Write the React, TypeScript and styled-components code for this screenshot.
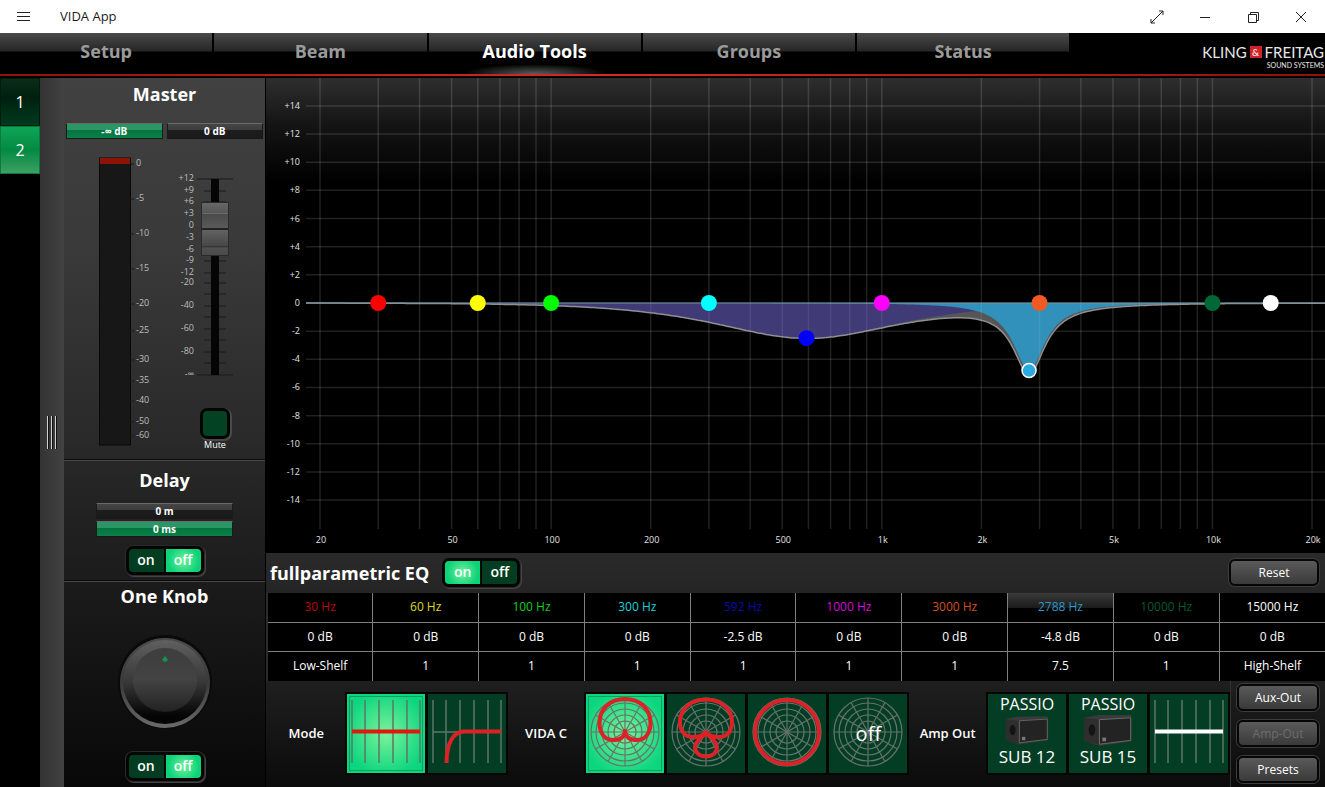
import React from "react";
import styled, { createGlobalStyle, css } from "styled-components";

const GlobalStyle = createGlobalStyle`
  *, *::before, *::after { box-sizing: border-box; }
  body {
    margin: 0;
    background: #000;
    color: #fff;
    font-family: "Open Sans", "Noto Sans", sans-serif;
    font-size: 12px;
  }
  button, input { font: inherit; color: inherit; margin: 0; padding: 0; border: 0; }
  button { cursor: pointer; }
  h2 { margin: 0; }
`;

const Page = styled.div`
  min-height: 100vh;
  display: flex;
  flex-direction: column;
`;

/* ---------- window title bar ---------- */

const TitleBar = styled.header`
  height: 33px;
  display: flex;
  align-items: center;
  background: #fff;
  color: #1c1c1c;
`;

const WindowButton = styled.button`
  width: 48px;
  height: 33px;
  display: flex;
  align-items: center;
  justify-content: center;
  background: none;
  color: #222;
`;

const AppName = styled.span`
  flex: 1;
  padding-left: 12px;
  font-size: 13px;
  line-height: 33px;
`;

/* ---------- top navigation ---------- */

const NavBar = styled.div`
  height: 45px;
  display: flex;
  justify-content: space-between;
  background:
    linear-gradient(to bottom, #000 41px, transparent 41px, transparent 43px, #0c0000 43px, #000 45px),
    linear-gradient(to right, #8c1212, #d62a24 45%, #8c1212);
`;

const Tabs = styled.nav`
  width: 80.7%;
  height: 41px;
  display: grid;
  grid-template-columns: repeat(5, 1fr);
  gap: 2px;
`;

const Tab = styled.a<{ $active?: boolean }>`
  color: ${(p) => (p.$active ? "#fff" : "#9b9b9b")};
  font-size: 18px;
  font-weight: 700;
  line-height: 37px;
  text-align: center;
  text-decoration: none;
  background: linear-gradient(to bottom, #4a4a4a, #262626 18px, #000 19px);
  ${(p) =>
    p.$active &&
    css`
      background: radial-gradient(ellipse 34% 10px at 50% 100%, #5c5c5c, transparent),
        linear-gradient(to bottom, #4a4a4a, #262626 18px, #000 19px);
    `}
`;

const Brand = styled.div`
  display: grid;
  grid-template-columns: auto 12px auto;
  column-gap: 3px;
  align-content: start;
  align-items: center;
  padding: 10px 1px 0 0;
  font-family: Lato, sans-serif;
  font-size: 15px;
  line-height: 18px;
  color: #e8e8e8;
`;

const Ampersand = styled.span`
  height: 12px;
  background: #d2232a;
  color: #fff;
  font-size: 10px;
  line-height: 12px;
  text-align: center;
`;

const BrandLine = styled.small`
  grid-column: 3;
  font-size: 7px;
  line-height: 8px;
  text-align: right;
  white-space: nowrap;
`;

/* ---------- body ---------- */

const Body = styled.div`
  flex: 1;
  display: flex;
`;

const ZoneList = styled.nav`
  width: 40px;
  background: #000;
`;

const ZoneButton = styled.button<{ $active?: boolean }>`
  display: block;
  width: 40px;
  height: 48px;
  font-size: 16px;
  border: 1px solid #001c0d;
  background: ${(p) =>
    p.$active
      ? "linear-gradient(to bottom, #0ea556, #048a42 50%, #3da063)"
      : "linear-gradient(to bottom, #0b2c19, #00200f 40%, #003a1e)"};
  ${(p) => p.$active && "border-color: #0a7a3c;"}
`;

const Splitter = styled.div`
  width: 24px;
  display: flex;
  align-items: center;
  justify-content: center;
  gap: 2px;
  background: linear-gradient(to right, #333, #424242);
`;

const GripLine = styled.i`
  width: 2px;
  height: 33px;
  background: linear-gradient(to right, #d0d0d0 50%, #111 50%);
`;

const SidePanel = styled.aside`
  width: 202px;
  display: flex;
  flex-direction: column;
  border-right: 1px solid #000;
  background: linear-gradient(to bottom, #414141, #393939 25%, #2a2a2a 50%, #1c1c1c 70%, #080808);
`;

const Section = styled.section<{ $grow?: boolean }>`
  display: flex;
  flex-direction: column;
  align-items: center;
  border-bottom: 1px solid #0a0a0a;
  & + & { border-top: 1px solid #484848; }
  ${(p) => p.$grow && "flex: 1; border-bottom: 0;"}
`;

const SectionTitle = styled.h2<{ $line?: number }>`
  font-size: 18px;
  font-weight: 700;
  line-height: ${(p) => p.$line ?? 32}px;
`;

const FieldPair = styled.div`
  align-self: stretch;
  display: grid;
  grid-template-columns: 1fr 1fr;
  gap: 4px;
  padding: 13px 2px 0;
`;

const FieldStack = styled.div`
  width: 137px;
  display: grid;
  gap: 2px;
  padding-top: 4px;
`;

const ValueField = styled.input<{ $green?: boolean }>`
  width: 100%;
  height: 16px;
  border: 1px solid #1a1a1a;
  border-top-color: #6a6a6a;
  font-size: 10px;
  font-weight: 700;
  line-height: 14px;
  text-align: center;
  background: ${(p) =>
    p.$green
      ? "linear-gradient(to bottom, #2b9566 45%, #05743f 45%, #0a8048)"
      : "linear-gradient(to bottom, #454545, #3c3c3c 45%, #1d1d1d 45%, #1a1a1a)"};
`;

const MasterControls = styled.div`
  align-self: stretch;
  display: flex;
  justify-content: space-between;
  padding-bottom: 8px;
`;

const FaderColumn = styled.div`
  width: 100px;
  display: flex;
  flex-direction: column;
  align-items: center;
  padding-top: 29px;
`;

const FaderStage = styled.div`
  display: grid;
  > * { grid-area: 1 / 1; }
`;

const Fader = styled.input`
  appearance: none;
  justify-self: center;
  width: 28px;
  height: 196px;
  margin: 11px 0 0;
  writing-mode: vertical-lr;
  direction: rtl;
  background: linear-gradient(to right, transparent 10px, #050505 10px, #050505 18px, transparent 18px);
  &::-webkit-slider-thumb {
    appearance: none;
    width: 28px;
    height: 54px;
    border: 1px solid #2a2a2a;
    background: linear-gradient(
      to bottom,
      #676767, #565656 10px, #8a8a8a 10px, #4a4a4a 11px, #5a5a5a 25px, #222 25px, #222 27px, #626262 27px, #474747 43px, #2e2e2e 43px, #505050 45px, #4a4a4a
    );
  }
`;

const MuteButton = styled.button`
  width: 30px;
  height: 31px;
  margin-top: 24px;
  border: 3px solid #040404;
  border-radius: 7px;
  background: #034223;
  box-shadow: 1px 1px 0 1px #4a4a4a;
`;

const MuteLabel = styled.label`
  font-size: 9px;
  line-height: 12px;
`;

const Toggle = styled.div`
  width: 78px;
  height: 29px;
  display: flex;
  gap: 2px;
  overflow: hidden;
  border: 3px solid #050505;
  border-radius: 7px;
  background: #050505;
  box-shadow: 0 0 0 1px #2a2a2a, 1px 1px 0 1px #444;
`;

const ToggleOption = styled.button<{ $on?: boolean }>`
  flex: 1;
  font-size: 14px;
  font-weight: 600;
  line-height: 20px;
  padding-bottom: 2px;
  background: ${(p) => (p.$on ? "radial-gradient(circle at 50% 50%, #6cf29c, #0cd278 75%)" : "#033d21")};
`;

const DelayToggleRow = styled.div`
  padding: 9px 0 5px;
`;

const KnobBox = styled.div`
  position: relative;
  width: 96px;
  height: 96px;
  margin: 24px 0 22px;
`;

const KnobInput = styled.input`
  position: absolute;
  inset: 0;
  width: 100%;
  height: 100%;
  opacity: 0;
`;

/* ---------- equaliser ---------- */

const Main = styled.main`
  flex: 1;
  min-width: 0;
  display: flex;
  flex-direction: column;
`;

const Graph = styled.svg`
  display: block;
  width: 100%;
  height: auto;
  background: linear-gradient(to bottom, #2e2e2e, #141414 10%, #000 22%);
`;

const EqHeader = styled.div`
  height: 40px;
  display: flex;
  align-items: center;
  gap: 13px;
  padding: 0 6px 1px 4px;
  background: linear-gradient(to bottom, #2a2a2a, #252525);
`;

const EqTitle = styled.h2`
  font-size: 18px;
  font-weight: 700;
`;

const PlainButton = styled.button`
  width: 90px;
  height: 27px;
  border: 2px solid #060606;
  border-radius: 6px;
  background: linear-gradient(to bottom, #5a5a5a, #3a3a3a);
  box-shadow: 0 0 0 1px #3c3c3c;
  &:disabled { color: #6c6c6c; cursor: default; }
`;

const Spacer = styled.span`
  flex: 1;
`;

const BandTable = styled.table`
  width: 100%;
  table-layout: fixed;
  border-collapse: collapse;
  background: #000;
  border-left: 2px solid #2c2c2c;
`;

const BandCell = styled.td<{ $selected?: boolean }>`
  height: 29px;
  padding: 0;
  text-align: center;
  line-height: 28px;
  border-right: 1px solid #808080;
  border-bottom: 1px solid #808080;
  &:last-child { border-right: 0; }
  tr:last-child & { border-bottom: 0; height: 30px; }
  ${(p) => p.$selected && "background: linear-gradient(to bottom, #3a3a3a, #1c1c1c 50%, #000 52%);"}
`;

const Footer = styled.div`
  flex: 1;
  display: flex;
  background: linear-gradient(to bottom, #1f1f1f, #0b0b0b);
`;

const Presets = styled.div`
  flex: 1;
  display: flex;
  align-items: flex-start;
  padding: 13px 2px 0 0;
`;

const GroupLabel = styled.span`
  flex: 1;
  font-weight: 600;
  font-size: 13px;
  line-height: 78px;
  text-align: center;
  white-space: nowrap;
`;

const TileGroup = styled.div`
  display: flex;
  gap: 3px;
`;

const Tile = styled.button<{ $on?: boolean }>`
  width: 78px;
  height: 79px;
  display: flex;
  flex-direction: column;
  align-items: center;
  background: #033d24;
  box-shadow: 0 0 0 2px #060606;
  ${(p) =>
    p.$on &&
    css`
      outline: 1px solid #08a35c;
      outline-offset: -3px;
      background: radial-gradient(ellipse 60% 60% at 50% 50%, #7cf29a, #0bd67f 90%);
    `}
`;

const TileArt = styled.svg`
  display: block;
  width: 78px;
  height: 79px;
  flex: none;
`;

const TileText = styled.span<{ $large?: boolean }>`
  font-size: ${(p) => (p.$large ? 17 : 16)}px;
  line-height: 20px;
`;

const OffStage = styled.span`
  display: grid;
  place-items: center;
  font-size: 20px;
  line-height: 76px;
  > * { grid-area: 1 / 1; }
`;

const ActionColumn = styled.div`
  width: 95px;
  display: flex;
  flex-direction: column;
  align-items: center;
  gap: 9px;
  padding-top: 3px;
  border-left: 1px solid #333;
  ${PlainButton} { width: 82px; }
`;

/* ---------- data ---------- */

type Band = { freq: number; label: string; gain: number; q: string; color: string; text: string; selected?: boolean };

const bands: Band[] = [
  { freq: 30, label: "30 Hz", gain: 0, q: "Low-Shelf", color: "#ff0000", text: "#b8090b" },
  { freq: 60, label: "60 Hz", gain: 0, q: "1", color: "#ffff00", text: "#dcdc20" },
  { freq: 100, label: "100 Hz", gain: 0, q: "1", color: "#00ff00", text: "#12cf22" },
  { freq: 300, label: "300 Hz", gain: 0, q: "1", color: "#00ffff", text: "#1fcfd2" },
  { freq: 592, label: "592 Hz", gain: -2.5, q: "1", color: "#0000ff", text: "#0a0aae" },
  { freq: 1000, label: "1000 Hz", gain: 0, q: "1", color: "#ff00ff", text: "#d40cd4" },
  { freq: 3000, label: "3000 Hz", gain: 0, q: "1", color: "#f15a24", text: "#d0501f" },
  { freq: 2788, label: "2788 Hz", gain: -4.8, q: "7.5", color: "#29abe2", text: "#2d98c6", selected: true },
  { freq: 10000, label: "10000 Hz", gain: 0, q: "1", color: "#006837", text: "#085a30" },
  { freq: 15000, label: "15000 Hz", gain: 0, q: "High-Shelf", color: "#ffffff", text: "#ffffff" },
];

const freqX = (f: number) => 54 + Math.log10(f / 20) * 330.67;
const gainY = (g: number) => 225 - g * 14.08;

const peak = (f: number, f0: number, gain: number, q: number) => {
  const a = Math.pow(10, gain / 40);
  const w = f / f0;
  const base = (1 - w * w) ** 2;
  return 10 * Math.log10((base + ((w * a) / q) ** 2) / (base + (w / (a * q)) ** 2));
};

const wide = (f: number) => peak(f, 592, -2.5, 0.62);
const narrow = (f: number) => peak(f, 2788, -4.8, 3.7);

const tracePath = (fn: (f: number) => number) => {
  let d = "";
  for (let x = 40; x <= 1060; x += 2) {
    const f = 20 * Math.pow(10, (x - 54) / 330.67);
    d += `${d ? "L" : "M"}${x} ${gainY(fn(f)).toFixed(1)}`;
  }
  return d;
};

const gridFreqs = [20, 30, 40, 50, 60, 70, 80, 90, 100].flatMap((f) => [f, f * 10, f * 100]).concat([20000]);
const freqLabels: [number, string][] = [
  [20, "20"], [50, "50"], [100, "100"], [200, "200"], [500, "500"],
  [1000, "1k"], [2000, "2k"], [5000, "5k"], [10000, "10k"], [20000, "20k"],
];
const gainSteps = Array.from({ length: 15 }, (_, i) => 14 - i * 2);

const meterMarks: [number, string][] = [
  [24, "0"], [59, "-5"], [94, "-10"], [129, "-15"], [164, "-20"], [191, "-25"],
  [220, "-30"], [241, "-35"], [261, "-40"], [282, "-50"], [296, "-60"],
];

const faderMarks: [number, string][] = [
  [10, "+12"], [22, "+9"], [33, "+6"], [45, "+3"], [57, "0"], [69, "-3"], [81, "-6"],
  [92, "-9"], [104, "-12"], [114, "-20"], [137, "-40"], [160, "-60"], [183, "-80"], [206, "-∞"],
];

/* ---------- drawings ---------- */

const EqGraph = () => (
  <Graph viewBox="0 0 1059 475" role="img" aria-label="Equaliser response">
    <g stroke="#fff" strokeOpacity="0.13" strokeWidth="1.5">
      {gridFreqs.map((f) => (
        <line key={f} x1={freqX(f)} x2={freqX(f)} y1="0" y2="451" />
      ))}
      {gainSteps.map((g) => (
        <line key={g} x1="40" x2="1060" y1={gainY(g)} y2={gainY(g)} />
      ))}
    </g>
    <g fill="#e4e4e4" fontSize="9">
      {gainSteps.map((g) => (
        <text key={g} x="34" y={gainY(g) + 3} textAnchor="end">{g > 0 ? `+${g}` : g}</text>
      ))}
      {freqLabels.map(([f, t]) => (
        <text key={t} x={freqX(f) + 1} y="465" textAnchor="middle">{t}</text>
      ))}
    </g>
    <path d={tracePath((f) => wide(f) + narrow(f)) + "V225H40Z"} fill="#565656" />
    <path d={tracePath(wide) + "V225H40Z"} fill="#403b76" />
    <path d={tracePath(narrow) + "V225H40Z"} fill="#3191ba" />
    <path d={tracePath((f) => wide(f) + narrow(f))} fill="none" stroke="#8f8f94" strokeWidth="1.5" />
    <line x1="40" x2="1060" y1="225" y2="225" stroke="#7396a4" strokeWidth="1" />
    <g stroke="#fff" strokeOpacity="0.08" strokeWidth="1.5">
      {gridFreqs.map((f) => (
        <line key={f} x1={freqX(f)} x2={freqX(f)} y1="225" y2={gainY(wide(f) + narrow(f))} />
      ))}
    </g>
    {bands.map((b) => (
      <circle
        key={b.label}
        cx={freqX(b.freq)}
        cy={gainY(b.gain)}
        r={b.selected ? 7 : 8}
        fill={b.color}
        stroke={b.selected ? "#fff" : "none"}
        strokeWidth="1.5"
      />
    ))}
  </Graph>
);

const Meter = () => (
  <svg width="96" height="310" viewBox="0 0 96 310" role="img" aria-label="Master output level">
    <rect x="35.500" y="19" width="31" height="287" fill="#171717" stroke="#080808" />
    <rect x="36" y="19" width="30" height="6" fill="#8e1206" />
    {meterMarks.map(([y, t]) => (
      <g key={t}>
        <line x1="66" x2="70" y1={y + 1} y2={y + 1} stroke="#1d1d1d" />
        <text x="72" y={y + 3} fontSize="9" fill="#bdbdbd">{t}</text>
      </g>
    ))}
  </svg>
);

const FaderScale = () => (
  <svg width="100" height="216" viewBox="0 0 100 216" aria-hidden="true">
    {faderMarks.map(([y, t], i) => {
      const reach = i === 0 || i === faderMarks.length - 1 ? 18 : 11;
      return (
        <g key={t}>
          <line x1={50 - reach} x2={50 + reach} y1={y + 1} y2={y + 1} stroke="#1a1a1a" />
          <text x="29" y={y + 3} fontSize="9" fill="#bdbdbd" textAnchor="end">{t}</text>
        </g>
      );
    })}
    {[126, 149, 172, 195].map((y) => (
      <line key={y} x1="39" x2="61" y1={y} y2={y} stroke="#1a1a1a" />
    ))}
  </svg>
);

const Knob = () => (
  <KnobBox>
    <svg width="96" height="96" viewBox="0 0 96 96" aria-hidden="true">
      <defs>
        <linearGradient id="knobRim" x1="0" y1="0" x2="0" y2="1">
          <stop offset="0" stopColor="#4a4a4a" />
          <stop offset="0.5" stopColor="#3a3a3a" />
          <stop offset="1" stopColor="#6a6a6a" />
        </linearGradient>
        <linearGradient id="knobBody" x1="0" y1="0" x2="0" y2="1">
          <stop offset="0" stopColor="#606060" />
          <stop offset="0.5" stopColor="#383838" />
          <stop offset="0.9" stopColor="#050505" />
        </linearGradient>
        <linearGradient id="knobCap" x1="0" y1="0" x2="0" y2="1">
          <stop offset="0" stopColor="#3e3e3e" />
          <stop offset="0.5" stopColor="#434343" />
          <stop offset="1" stopColor="#222" />
        </linearGradient>
      </defs>
      <circle cx="48" cy="48" r="47" fill="#0a0a0a" />
      <circle cx="48" cy="49" r="45" fill="url(#knobRim)" />
      <circle cx="48" cy="48" r="42" fill="url(#knobBody)" />
      <circle cx="48" cy="46" r="32" fill="url(#knobCap)" />
      <path d="M48 22l3 4-3 2-3-2z" fill="#0d9a50" />
    </svg>
    <KnobInput type="range" min={0} max={100} defaultValue={50} aria-label="One Knob" />
  </KnobBox>
);

const Bars = () => (
  <g stroke="#5e7468" strokeWidth="1.5">
    {[5, 18, 32, 46, 60, 73].map((x) => (
      <line key={x} x1={x} x2={x} y1="6" y2="69" />
    ))}
  </g>
);

const polarSpokes = Array.from({ length: 6 }, (_, i) => (i * Math.PI) / 6);

const Polar = () => (
  <g fill="none" stroke="#66736c" strokeWidth="1.2">
    {[34, 29, 23, 17, 11].map((r) => (
      <circle key={r} cx="39" cy="38" r={r} />
    ))}
    {polarSpokes.map((a) => (
      <line
        key={a}
        x1={39 - 34 * Math.cos(a)}
        y1={38 - 34 * Math.sin(a)}
        x2={39 + 34 * Math.cos(a)}
        y2={38 + 34 * Math.sin(a)}
      />
    ))}
  </g>
);

const Pattern = ({ d }: { d: string }) => (
  <path d={d} fill="none" stroke="#dc2227" strokeWidth="4" strokeLinejoin="round" />
);

const Cabinet = ({ size }: { size: number }) => (
  <svg width={size} height="33" viewBox="0 0 52 35" preserveAspectRatio="xMidYMid meet" aria-hidden="true">
    <path d="M1 4L15 1H51V29L17 34L1 29Z" fill="#3a3a3a" />
    <path d="M1 4L16 6V33L1 29Z" fill="#2e2e2e" />
    <path d="M17 6L50 4V28L17 32Z" fill="#232323" stroke="#6a6a6a" />
    <ellipse cx="9" cy="17" rx="3.5" ry="6" fill="#141414" />
    <rect x="20" y="25" width="4" height="4" fill="#777" />
  </svg>
);

const OnOff = ({ value, label }: { value: "on" | "off"; label: string }) => (
  <Toggle role="group" aria-label={label}>
    <ToggleOption $on={value === "on"} aria-pressed={value === "on"}>on</ToggleOption>
    <ToggleOption $on={value === "off"} aria-pressed={value === "off"}>off</ToggleOption>
  </Toggle>
);

/* ---------- app ---------- */

export default function App() {
  return (
    <Page>
      <GlobalStyle />
      <TitleBar>
        <WindowButton aria-label="Menu">
          <svg width="14" height="12" viewBox="0 0 14 12" stroke="currentColor" fill="none">
            <path d="M0 1.500h13M0 5.500h13M0 9.500h13" />
          </svg>
        </WindowButton>
        <AppName>VIDA App</AppName>
        <WindowButton aria-label="Full screen">
          <svg width="14" height="14" viewBox="0 0 14 14" stroke="currentColor" fill="none">
            <path d="M1 13L13 1M9 1h4v4M1 9v4h4" />
          </svg>
        </WindowButton>
        <WindowButton aria-label="Minimise">
          <svg width="12" height="12" viewBox="0 0 12 12" stroke="currentColor" fill="none">
            <path d="M1 6.500h10" />
          </svg>
        </WindowButton>
        <WindowButton aria-label="Restore">
          <svg width="12" height="12" viewBox="0 0 12 12" stroke="currentColor" fill="none">
            <path d="M1.500 3.500h8v8h-8zM3.500 3.500v-2h8v8h-2" />
          </svg>
        </WindowButton>
        <WindowButton aria-label="Close">
          <svg width="12" height="12" viewBox="0 0 12 12" stroke="currentColor" fill="none">
            <path d="M1 1l10 10M11 1L1 11" />
          </svg>
        </WindowButton>
      </TitleBar>

      <NavBar>
        <Tabs>
          <Tab href="#setup">Setup</Tab>
          <Tab href="#beam">Beam</Tab>
          <Tab href="#audio" $active>Audio Tools</Tab>
          <Tab href="#groups">Groups</Tab>
          <Tab href="#status">Status</Tab>
        </Tabs>
        <Brand>
          <span>KLING</span>
          <Ampersand>&amp;</Ampersand>
          <span>FREITAG</span>
          <BrandLine>SOUND SYSTEMS</BrandLine>
        </Brand>
      </NavBar>

      <Body>
        <ZoneList>
          <ZoneButton>1</ZoneButton>
          <ZoneButton $active>2</ZoneButton>
        </ZoneList>
        <Splitter>
          <GripLine />
          <GripLine />
          <GripLine />
        </Splitter>

        <SidePanel>
          <Section>
            <SectionTitle>Master</SectionTitle>
            <FieldPair>
              <ValueField $green defaultValue="-∞ dB" aria-label="Output level" />
              <ValueField defaultValue="0 dB" aria-label="Master gain" />
            </FieldPair>
            <MasterControls>
              <Meter />
              <FaderColumn>
                <FaderStage>
                  <FaderScale />
                  <Fader type="range" min={0} max={100} defaultValue={84} aria-label="Master fader" />
                </FaderStage>
                <MuteButton id="mute" />
                <MuteLabel htmlFor="mute">Mute</MuteLabel>
              </FaderColumn>
            </MasterControls>
          </Section>

          <Section>
            <SectionTitle $line={38}>Delay</SectionTitle>
            <FieldStack>
              <ValueField defaultValue="0 m" aria-label="Delay distance" />
              <ValueField $green defaultValue="0 ms" aria-label="Delay time" />
            </FieldStack>
            <DelayToggleRow>
              <OnOff value="off" label="Delay" />
            </DelayToggleRow>
          </Section>

          <Section $grow>
            <SectionTitle $line={28}>One Knob</SectionTitle>
            <Knob />
            <OnOff value="off" label="One Knob" />
          </Section>
        </SidePanel>

        <Main>
          <EqGraph />
          <EqHeader>
            <EqTitle>fullparametric EQ</EqTitle>
            <OnOff value="on" label="Fullparametric EQ" />
            <Spacer />
            <PlainButton>Reset</PlainButton>
          </EqHeader>
          <BandTable>
            <tbody>
              <tr>
                {bands.map((b) => (
                  <BandCell key={b.label} $selected={b.selected} style={{ color: b.text }}>{b.label}</BandCell>
                ))}
              </tr>
              <tr>
                {bands.map((b) => (
                  <BandCell key={b.label}>{b.gain} dB</BandCell>
                ))}
              </tr>
              <tr>
                {bands.map((b) => (
                  <BandCell key={b.label}>{b.q}</BandCell>
                ))}
              </tr>
            </tbody>
          </BandTable>
          <Footer>
            <Presets>
              <GroupLabel>Mode</GroupLabel>
              <TileGroup>
                <Tile $on aria-label="Full range">
                  <TileArt viewBox="0 0 78 79">
                    <Bars />
                    <path d="M5 37.500H73" stroke="#e0190f" strokeWidth="4" />
                  </TileArt>
                </Tile>
                <Tile aria-label="High pass">
                  <TileArt viewBox="0 0 78 79">
                    <Bars />
                    <path d="M5 38H36" stroke="#5e7468" strokeWidth="1.5" />
                    <Pattern d="M73 37.500H36C25 37.500 18.500 50 18.500 69" />
                  </TileArt>
                </Tile>
              </TileGroup>
              <GroupLabel>VIDA C</GroupLabel>
              <TileGroup>
                <Tile $on aria-label="Cardioid">
                  <TileArt viewBox="0 0 78 79">
                    <Polar />
                    <Pattern d="M39 37C39 43 34 46 27 46C18 46 13.500 38 13.500 29C13.500 15 24 5 39 5C54 5 64.500 15 64.500 29C64.500 38 60 46 51 46C44 46 39 43 39 37Z" />
                  </TileArt>
                </Tile>
                <Tile aria-label="Hypercardioid">
                  <TileArt viewBox="0 0 78 79">
                    <Polar />
                    <Pattern d="M39 38C36 42 31 43 26 43C17 43 13 36 13 28C13 14 25 5.500 39 5.500C53 5.500 65 14 65 28C65 36 61 43 52 43C47 43 42 42 39 38ZM39 39C34 44 28 48 28 53C28 59 33 62.500 39 62.500C45 62.500 50 59 50 53C50 48 44 44 39 39Z" />
                  </TileArt>
                </Tile>
                <Tile aria-label="Omni">
                  <TileArt viewBox="0 0 78 79">
                    <Polar />
                    <circle cx="39" cy="38" r="32" fill="none" stroke="#dc2227" strokeWidth="4" />
                  </TileArt>
                </Tile>
                <Tile>
                  <OffStage>
                    <TileArt viewBox="0 0 78 79" aria-hidden="true">
                      <Polar />
                    </TileArt>
                    <span>off</span>
                  </OffStage>
                </Tile>
              </TileGroup>
              <GroupLabel>Amp Out</GroupLabel>
              <TileGroup>
                <Tile>
                  <TileText>PASSIO</TileText>
                  <Cabinet size={44} />
                  <TileText $large>SUB 12</TileText>
                </Tile>
                <Tile>
                  <TileText>PASSIO</TileText>
                  <Cabinet size={52} />
                  <TileText $large>SUB 15</TileText>
                </Tile>
                <Tile aria-label="Linear">
                  <TileArt viewBox="0 0 78 79">
                    <Bars />
                    <path d="M5 37.500H73" stroke="#fff" strokeWidth="4" />
                  </TileArt>
                </Tile>
              </TileGroup>
            </Presets>
            <ActionColumn>
              <PlainButton>Aux-Out</PlainButton>
              <PlainButton disabled>Amp-Out</PlainButton>
              <PlainButton>Presets</PlainButton>
            </ActionColumn>
          </Footer>
        </Main>
      </Body>
    </Page>
  );
}
